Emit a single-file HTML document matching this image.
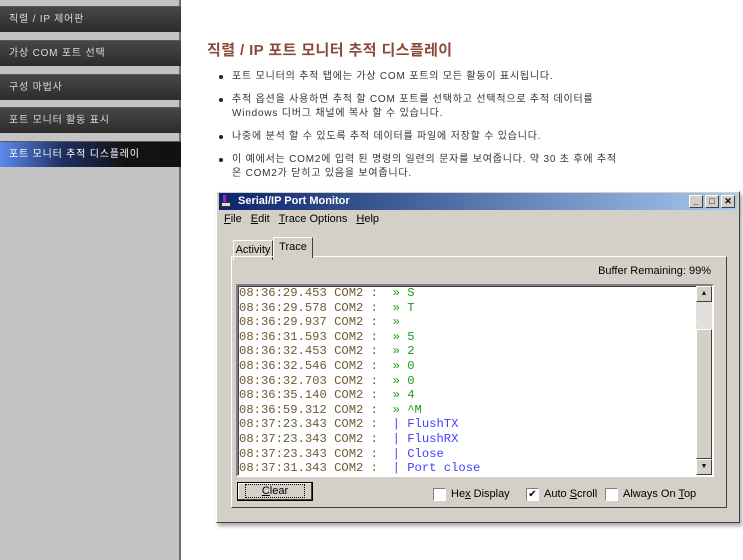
<!DOCTYPE html>
<html><head><meta charset="utf-8"><style>
*{margin:0;padding:0;box-sizing:border-box}
body{width:743px;height:560px;background:#fff;position:relative;overflow:hidden;font-family:"Liberation Sans","Noto Sans CJK KR",sans-serif}
#side{position:absolute;left:0;top:0;width:181px;height:560px;background:#c3c3c3;border-right:2px solid #6e6e6e}
.nb{position:absolute;left:0;width:181px;height:26px;background:linear-gradient(#474747,#2c2c2c);color:#dcdcdc;font-size:10px;line-height:26px;padding-left:9px;border-top:1px solid #5a5a5a;letter-spacing:0.8px}
.nb.act{background:linear-gradient(90deg,#5b8af0 0%,#1e2e60 35%,#121212 70%,#111 100%);color:#fff}
h1{position:absolute;left:207px;top:39px;font-size:15px;color:#8a4a38;font-weight:bold;letter-spacing:0.4px}
ul{position:absolute;left:218px;top:70px;width:420px;font-size:10px;letter-spacing:0.8px;color:#333;list-style:none}
li{position:relative;padding-left:14px;line-height:14px;margin-bottom:9px}
li:before{content:"";position:absolute;left:1px;top:5px;width:4px;height:4px;border-radius:2px;background:#222}
#win{position:absolute;left:216px;top:191px;width:524px;height:332px;background:#d4d0c8;border:1px solid #fff;border-right-color:#404040;border-bottom-color:#404040;box-shadow:2px 3px 4px rgba(0,0,0,.35);font-size:11px}
#tb{position:absolute;left:2px;top:1px;right:2px;height:17px;background:linear-gradient(90deg,#0a246a,#a6caf0);color:#fff;font-weight:bold;font-family:"Liberation Sans",sans-serif;font-size:11px;line-height:17px;padding-left:19px}
.wb{position:absolute;top:2px;width:14px;height:13px;background:#d4d0c8;border:1px solid #fff;border-right-color:#404040;border-bottom-color:#404040;color:#000;font-size:9px;line-height:11px;text-align:center;font-weight:bold}
#menu{position:absolute;left:7px;top:21px;font-size:11px}
#menu span{margin-right:9px}
u{text-decoration:underline}
.tab{position:absolute;height:20px;border:1px solid #fff;border-right-color:#404040;border-bottom:none;font-size:11px;text-align:center;line-height:19px;background:#d4d0c8}
#panel{position:absolute;left:14px;top:64px;width:496px;height:252px;border:1px solid #fff;border-right-color:#404040;border-bottom-color:#404040}
#list{position:absolute;left:19px;top:92px;width:478px;height:193px;background:#fff;border:2px solid #808080;border-right-color:#fff;border-bottom-color:#fff;box-shadow:inset 1px 1px 0 #404040;font-family:"Liberation Mono",monospace;font-size:12.2px;line-height:14.6px;color:#6d5a33;padding:0 0 0 1px;white-space:pre;overflow:hidden}
.g{color:#1a9a1a}.b{color:#4040ff}
#sb{position:absolute;right:0;top:0;width:16px;height:189px;background:#d4d0c8}
.sbb{position:absolute;left:0;width:16px;height:16px;background:#d4d0c8;border:1px solid #fff;border-right-color:#404040;border-bottom-color:#404040;font-size:7px;line-height:14px;text-align:center;color:#000}
.ck{position:absolute;font-size:11px;line-height:13px}
.cb{position:absolute;left:0;top:0;width:13px;height:13px;background:#fff;border:1px solid #808080;border-right-color:#fff;border-bottom-color:#fff;font-size:10px;line-height:11px;text-align:center}
.ck span.t{padding-left:18px}
</style></head><body>
<div id="side">
<div class="nb" style="top:6px">직렬 / IP 제어판</div>
<div class="nb" style="top:40px">가상 COM 포트 선택</div>
<div class="nb" style="top:74px">구성 마법사</div>
<div class="nb" style="top:107px">포트 모니터 활동 표시</div>
<div class="nb act" style="top:141px">포트 모니터 추적 디스플레이</div>
</div>
<h1>직렬 / IP 포트 모니터 추적 디스플레이</h1>
<ul>
<li>포트 모니터의 추적 탭에는 가상 COM 포트의 모든 활동이 표시됩니다.</li>
<li>추적 옵션을 사용하면 추적 할 COM 포트를 선택하고 선택적으로 추적 데이터를<br>Windows 디버그 채널에 복사 할 수 있습니다.</li>
<li>나중에 분석 할 수 있도록 추적 데이터를 파일에 저장할 수 있습니다.</li>
<li>이 예에서는 COM2에 입력 된 명령의 일련의 문자를 보여줍니다. 약 30 초 후에 추적<br>은 COM2가 닫히고 있음을 보여줍니다.</li>
</ul>
<div id="win">
<div id="tb"><span style="position:absolute;left:4px;top:2px;width:3px;height:7px;background:#a020c0"></span><span style="position:absolute;left:2px;top:9px;width:10px;height:5px;background:#ddd;border:1px solid #333"></span>Serial/IP Port Monitor
<div class="wb" style="right:34px">_</div><div class="wb" style="right:18px">□</div><div class="wb" style="right:2px">✕</div></div>
<div id="menu"><span><u>F</u>ile</span><span><u>E</u>dit</span><span><u>T</u>race Options</span><span><u>H</u>elp</span></div>
<div class="tab" style="left:16px;top:48px;width:40px">Activity</div>
<div class="tab" style="left:56px;top:45px;width:40px;height:21px;z-index:2">Trace</div>
<div id="panel"></div>
<div style="position:absolute;right:28px;top:73px;font-size:11px">Buffer Remaining: 99%</div>
<div id="list">08:36:29.453 COM2 :  <span class="g">» S</span>
08:36:29.578 COM2 :  <span class="g">» T</span>
08:36:29.937 COM2 :  <span class="g">»</span>
08:36:31.593 COM2 :  <span class="g">» 5</span>
08:36:32.453 COM2 :  <span class="g">» 2</span>
08:36:32.546 COM2 :  <span class="g">» 0</span>
08:36:32.703 COM2 :  <span class="g">» 0</span>
08:36:35.140 COM2 :  <span class="g">» 4</span>
08:36:59.312 COM2 :  <span class="g">» ^M</span>
08:37:23.343 COM2 :  <span class="b">| FlushTX</span>
08:37:23.343 COM2 :  <span class="b">| FlushRX</span>
08:37:23.343 COM2 :  <span class="b">| Close</span>
08:37:31.343 COM2 :  <span class="b">| Port close</span>
<div id="sb"><div class="sbb" style="top:0">▲</div><div style="position:absolute;top:16px;left:0;width:16px;height:27px;background:repeating-linear-gradient(45deg,#eee 0 1px,#d4d0c8 1px 2px)"></div><div class="sbb" style="top:43px;height:130px"></div><div class="sbb" style="top:173px">▼</div></div>
</div>
<div style="position:absolute;left:20px;top:290px;width:76px;height:19px;border:1px solid #000;box-shadow:inset -1px -1px 0 #404040,inset 1px 1px 0 #fff;text-align:center;font-size:11px;line-height:17px"><span style="outline:1px dotted #000;padding:0 16px"><u>C</u>lear</span></div>
<div class="ck" style="left:216px;top:296px"><span class="cb"></span><span class="t">He<u>x</u> Display</span></div>
<div class="ck" style="left:309px;top:296px"><span class="cb">✔</span><span class="t">Auto <u>S</u>croll</span></div>
<div class="ck" style="left:388px;top:296px"><span class="cb"></span><span class="t">Always On <u>T</u>op</span></div>
</div>
</body></html>
